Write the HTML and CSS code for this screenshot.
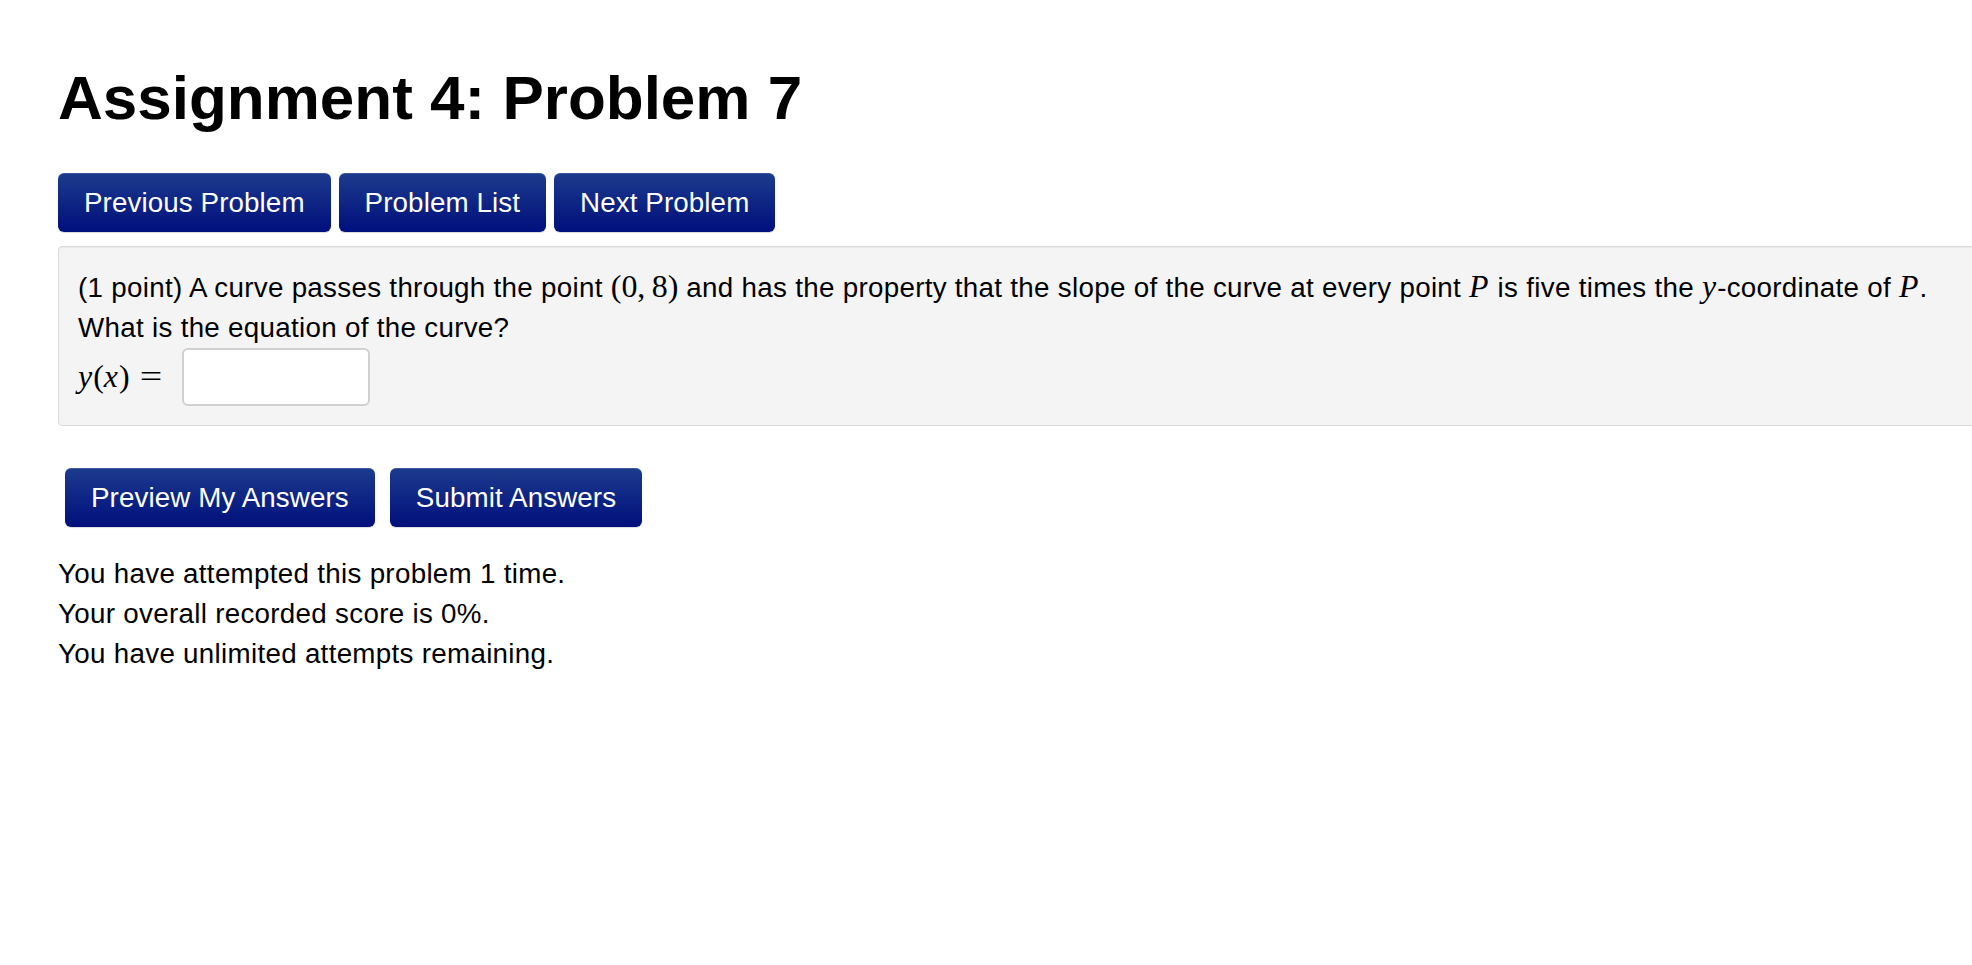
FILE: index.html
```html
<!DOCTYPE html>
<html lang="en">
<head>
  <meta charset="UTF-8" />
  <title>Assignment 4: Problem 7</title>
  <link rel="stylesheet" href="styles.css">
</head>
<body>

  <h1>Assignment 4: Problem 7</h1>

  <div class="nav-buttons">
    <a class="btn" href="#">Previous Problem</a>
    <a class="btn" href="#">Problem List</a>
    <a class="btn" href="#">Next Problem</a>
  </div>

  <div class="problem">
    <p>(1 point) A curve passes through the point <span class="math">(0,&thinsp;8)</span> and has the property that the slope of the curve at every point <span class="math"><i>P</i></span> is five times the <span class="math"><i>y</i></span>-coordinate of <span class="math"><i>P</i></span>.</p>
    <p>What is the equation of the curve?</p>
    <div class="answer-row">
      <span class="math"><i>y</i>(<i>x</i>)<span class="eq">=</span></span>
      <input type="text" class="answer-box">
    </div>
  </div>

  <form class="submit-buttons">
    <button type="button" class="btn">Preview My Answers</button>
    <button type="button" class="btn">Submit Answers</button>
  </form>

  <div class="attempts">
    <p>You have attempted this problem 1 time.</p>
    <p>Your overall recorded score is 0%.</p>
    <p>You have unlimited attempts remaining.</p>
  </div>

</body>
</html>
```

FILE: styles.css
```css
html {
  overflow-x: hidden;
}

body {
  font-family: "Liberation Sans", Arial, sans-serif;
  font-size: 27.75px;
  line-height: 40px;
  letter-spacing: 0.3px;
  color: #000;
  margin: 0;
  padding: 0 0 0 58px;
}

h1 {
  font-size: 62px;
  font-weight: bold;
  line-height: normal;
  letter-spacing: 0;
  margin: 62px 0 40px;
}

.nav-buttons {
  display: flex;
  gap: 8px;
}

.btn {
  display: inline-block;
  font-family: "Liberation Sans", Arial, sans-serif;
  font-size: 27.75px;
  line-height: 33px;
  letter-spacing: 0.1px;
  padding: 13px 26px;
  color: #fff;
  text-decoration: none;
  background: linear-gradient(#1c3b8d, #000f7c);
  border: 0;
  border-radius: 6px;
  box-shadow: inset 0 1px 0 rgba(255, 255, 255, 0.15), 0 1px 1px rgba(0, 0, 0, 0.15);
  cursor: pointer;
}

.problem {
  margin: 14px -20px 0 0;
  padding: 20px 20px 19px 19px;
  background-color: #f4f4f4;
  border: 1px solid #dcdcdc;
  border-radius: 4px;
  box-shadow: inset 0 1px 1px rgba(0, 0, 0, 0.05);
}

.problem p {
  margin: 0;
}

.math {
  font-family: "Liberation Serif", "Times New Roman", serif;
  font-size: 1.15em;
  letter-spacing: 0;
}

.math i {
  padding-right: 1px;
}

.eq {
  display: inline-block;
  margin-left: 0.4em;
  transform: scaleX(1.25);
}

.answer-row {
  display: flex;
  align-items: center;
  gap: 22px;
}

.answer-box {
  width: 188px;
  height: 58px;
  box-sizing: border-box;
  border: 2px solid #d0d0d0;
  border-radius: 6px;
  background: #fff;
}

.submit-buttons {
  display: flex;
  gap: 15px;
  margin: 42px 0 0 7px;
}

.attempts {
  margin-top: 27px;
}

.attempts p {
  margin: 0;
}
```
